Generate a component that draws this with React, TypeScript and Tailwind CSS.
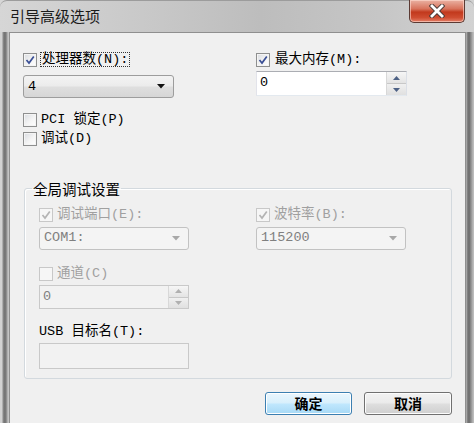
import React from "react";

function Check({ checked, disabled }: { checked?: boolean; disabled?: boolean }) {
  return (
    <span
      className={
        disabled
          ? "flex h-[14px] w-[14px] shrink-0 items-center justify-center border border-[#c8c8c8] bg-[#f6f6f6]"
          : "flex h-[14px] w-[14px] shrink-0 items-center justify-center border border-[#8e8f8f] bg-[linear-gradient(135deg,#d8dbe0,#f4f4f4_55%,#ffffff)] shadow-[inset_0_0_0_1px_#f4f4f4]"
      }
    >
      {checked && (
        <svg width="10" height="10" viewBox="0 0 10 10">
          <path
            d="M1.5 5 L4 8 L8.8 1.5"
            stroke={disabled ? "#b4b4b4" : "#3a4f95"}
            strokeWidth="1.7"
            fill="none"
          />
        </svg>
      )}
    </span>
  );
}

function Arrow({ disabled }: { disabled?: boolean }) {
  return (
    <svg width="8" height="5" viewBox="0 0 8 5">
      <path d="M0 0 H8 L4 4.5 Z" fill={disabled ? "#a8a8a8" : "#111"} />
    </svg>
  );
}

function Spin({ disabled }: { disabled?: boolean }) {
  const c = disabled ? "#b0b0b0" : "#4d6185";
  return (
    <div className="flex h-full w-[20px] flex-col border-l border-[#d8d8d8]">
      <div className="flex flex-1 items-center justify-center border-b border-[#c8c8c8] bg-[linear-gradient(#f6f6f6,#e4e4e4)]">
        <svg width="7" height="4" viewBox="0 0 7 4">
          <path d="M0 4 L3.5 0 L7 4 Z" fill={c} />
        </svg>
      </div>
      <div className="flex flex-1 items-center justify-center bg-[linear-gradient(#f0f0f0,#e0e0e0)]">
        <svg width="7" height="4" viewBox="0 0 7 4">
          <path d="M0 0 L7 0 L3.5 4 Z" fill={c} />
        </svg>
      </div>
    </div>
  );
}

export default function App() {
  return (
    <div className="relative flex h-[423px] w-[474px] flex-col overflow-hidden bg-[linear-gradient(90deg,#d6d6d6,#c9c9c9_30%,#bdbdbd_55%,#c6c6c6_80%,#d2d2d2)] font-['Liberation_Mono','Noto_Sans_CJK_SC',monospace] text-[13.5px] text-black">
      {/* title bar */}
      <div className="flex h-[32px] shrink-0 items-start rounded-t-[7px] border-t border-[#9c9c9c]">
        <span className="pl-[10px] pt-[5px] font-['Noto_Sans_CJK_SC',sans-serif] text-[15px] leading-[20px] text-[#1a1a1a]">
          引导高级选项
        </span>
      </div>
      {/* close button */}
      <div className="absolute right-[9px] top-0 flex h-[23px] w-[56px] items-center justify-center rounded-b-[5px] border border-t-0 border-[#5b3a33] bg-[linear-gradient(#eab2a3,#d8735c_40%,#c2391d_55%,#cf4d31_80%,#e48068)] shadow-[inset_0_0_0_1px_rgba(255,220,210,0.6)]">
        <svg width="16" height="14" viewBox="0 0 16 14">
          <path d="M3 2 L13 12 M13 2 L3 12" stroke="#4a3a36" strokeWidth="4.6" strokeLinecap="square" />
          <path d="M3 2 L13 12 M13 2 L3 12" stroke="#ffffff" strokeWidth="2.8" strokeLinecap="square" />
        </svg>
      </div>

      {/* body */}
      <div className="flex flex-1">
        <div className="w-[9px] shrink-0 bg-[linear-gradient(90deg,#d2d2d2_0,#d2d2d2_2px,#8c8c8c_3px,#6e6e6e_5px,#9a9a9a_7px,#c4c4c4_8px)]" />
        <div className="flex flex-1 flex-col border-l border-r border-t border-[#8f8f8f] bg-[#f0f0f0] px-[13px] pt-[19px]">
          {/* top section */}
          <div className="flex">
            <div className="flex w-[151px] flex-col">
              <div className="flex h-[15px] items-center gap-[3px]">
                <Check checked />
                <span className="border border-dotted border-[#333] px-[1px] leading-[13px]">处理器数(N):</span>
              </div>
              <div className="mt-[8px] flex h-[23px] items-center justify-between rounded-[3px] border border-[#9d9d9d] bg-[linear-gradient(#f3f3f3,#ececec_45%,#dedede_55%,#d6d6d6)] pl-[4px] pr-[8px]">
                <span className="leading-[15px]">4</span>
                <Arrow />
              </div>
              <div className="mt-[14px] flex h-[15px] items-center gap-[4px]">
                <Check />
                <span className="leading-[15px]">PCI 锁定(P)</span>
              </div>
              <div className="mt-[4px] flex h-[15px] items-center gap-[4px]">
                <Check />
                <span className="leading-[15px]">调试(D)</span>
              </div>
            </div>
            <div className="ml-[82px] flex w-[151px] flex-col">
              <div className="flex h-[15px] items-center gap-[5px]">
                <Check checked />
                <span className="leading-[15px]">最大内存(M):</span>
              </div>
              <div className="mt-[4px] flex h-[25px] items-stretch border border-[#abadb3] border-b-[#e3e9ef] border-l-[#e2e3ea] border-r-[#dbdfe6] bg-white">
                <span className="flex flex-1 items-center pl-[3px]">0</span>
                <Spin />
              </div>
            </div>
          </div>

          {/* group box */}
          <fieldset className="ml-[1px] mt-[34px] w-[428px] rounded-[3px] border border-[#d3d9de] pb-[9px] pl-[14px] shadow-[inset_1px_1px_0_#ffffff]">
            <legend className="-ml-[7px] px-[1px] font-['Noto_Sans_CJK_SC',sans-serif] text-[14.5px] leading-[17px]">全局调试设置</legend>
            <div className="mt-[10px] flex">
              <div className="flex w-[150px] flex-col text-[#a0a0a0]">
                <div className="flex h-[15px] items-center gap-[4px]">
                  <Check checked disabled />
                  <span className="leading-[15px]">调试端口(E):</span>
                </div>
                <div className="mt-[5px] flex h-[23px] items-center justify-between rounded-[3px] border border-[#c2c2c2] bg-[#f4f4f4] pl-[4px] pr-[8px]">
                  <span className="text-[#808080]">COM1:</span>
                  <Arrow disabled />
                </div>
                <div className="mt-[16px] flex h-[15px] items-center gap-[4px]">
                  <Check disabled />
                  <span className="leading-[15px]">通道(C)</span>
                </div>
                <div className="mt-[4px] flex h-[24px] items-stretch border border-[#c9c9c9] bg-[#f2f2f2]">
                  <span className="flex flex-1 items-center pl-[3px] text-[#808080]">0</span>
                  <Spin disabled />
                </div>
                <div className="mt-[15px] flex h-[15px] items-center text-black">
                  <span className="leading-[15px]">USB 目标名(T):</span>
                </div>
                <div className="mt-[4px] h-[26px] border border-[#c9c9c9] bg-[#f2f2f2]" />
              </div>
              <div className="ml-[67px] flex w-[150px] flex-col text-[#a0a0a0]">
                <div className="flex h-[15px] items-center gap-[4px]">
                  <Check checked disabled />
                  <span className="leading-[15px]">波特率(B):</span>
                </div>
                <div className="mt-[5px] flex h-[23px] items-center justify-between rounded-[3px] border border-[#c2c2c2] bg-[#f4f4f4] pl-[4px] pr-[8px]">
                  <span className="text-[#808080]">115200</span>
                  <Arrow disabled />
                </div>
              </div>
            </div>
          </fieldset>

          {/* buttons */}
          <div className="mt-[13px] flex w-[429px] justify-end gap-[12px]">
            <button className="flex h-[23px] w-[87px] items-center justify-center rounded-[3px] border border-[#3c7fb1] bg-[linear-gradient(#eaf6fd,#d9f0fc_45%,#bee6fd_55%,#a7d9f5)] font-['Noto_Sans_CJK_SC',sans-serif] text-[14px] font-semibold shadow-[inset_0_0_0_1px_#ffffff]">
              确定
            </button>
            <button className="flex h-[23px] w-[88px] items-center justify-center rounded-[3px] border border-[#707070] bg-[linear-gradient(#f2f2f2,#ebebeb_45%,#dddddd_55%,#cfcfcf)] font-['Noto_Sans_CJK_SC',sans-serif] text-[14px] font-semibold shadow-[inset_0_0_0_1px_#fcfcfc]">
              取消
            </button>
          </div>
        </div>
        <div className="w-[10px] shrink-0 bg-[linear-gradient(90deg,#c4c4c4_0,#8a8a8a_1px,#6a6a6a_3px,#8e8e8e_5px,#b8b8b8_7px,#cfcfcf_10px)]" />
      </div>
    </div>
  );
}
